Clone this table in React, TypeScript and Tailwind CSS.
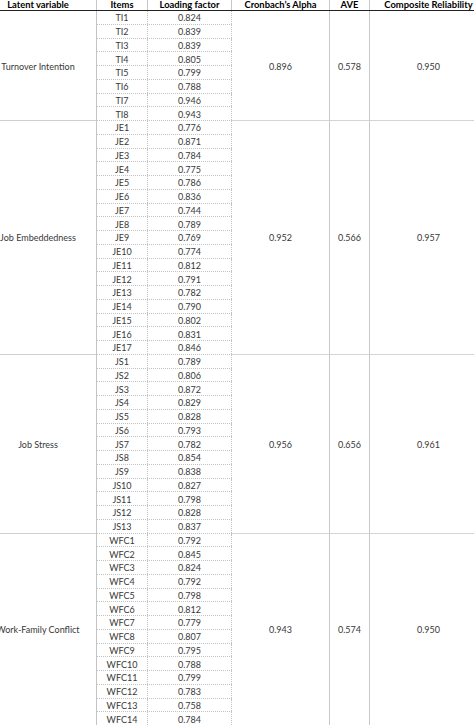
import React from "react";

type Group = {
  name: string;
  prefix: string;
  loads: string[];
  alpha: string;
  ave: string;
  cr: string;
};

const groups: Group[] = [
  {
    name: "Turnover Intention",
    prefix: "TI",
    loads: ["0.824", "0.839", "0.839", "0.805", "0.799", "0.788", "0.946", "0.943"],
    alpha: "0.896",
    ave: "0.578",
    cr: "0.950",
  },
  {
    name: "Job Embeddedness",
    prefix: "JE",
    loads: [
      "0.776", "0.871", "0.784", "0.775", "0.786", "0.836", "0.744", "0.789", "0.769",
      "0.774", "0.812", "0.791", "0.782", "0.790", "0.802", "0.831", "0.846",
    ],
    alpha: "0.952",
    ave: "0.566",
    cr: "0.957",
  },
  {
    name: "Job Stress",
    prefix: "JS",
    loads: [
      "0.789", "0.806", "0.872", "0.829", "0.828", "0.793", "0.782", "0.854", "0.838",
      "0.827", "0.798", "0.828", "0.837",
    ],
    alpha: "0.956",
    ave: "0.656",
    cr: "0.961",
  },
  {
    name: "Work-Family Conflict",
    prefix: "WFC",
    loads: [
      "0.792", "0.845", "0.824", "0.792", "0.798", "0.812", "0.779", "0.807", "0.795",
      "0.788", "0.799", "0.783", "0.758", "0.784",
    ],
    alpha: "0.943",
    ave: "0.574",
    cr: "0.950",
  },
];

const headers = [
  { t: "Latent variable", w: "w-[117px] border-r" },
  { t: "Items", w: "w-[51px] border-r" },
  { t: "Loading factor", w: "w-[84px] border-r" },
  { t: "Cronbach’s Alpha", w: "w-[98px] border-r" },
  { t: "AVE", w: "w-[40px] border-r" },
  { t: "Composite Reliability", w: "w-[117px]" },
];

export default function App() {
  return (
    <div className="w-[474px] h-[725px] overflow-hidden bg-white font-['Lato','Open_Sans',sans-serif] text-[9px] leading-none text-[#383838]">
      <div className="ml-[-20px] w-[507px] flex flex-col">
        <div className="flex h-[11px] border-b border-[#222]">
          {headers.map((h) => (
            <div
              key={h.t}
              className={`${h.w} shrink-0 flex items-start justify-center whitespace-nowrap border-r-[#c8c8c8] text-[9.4px] leading-[10px] font-bold text-black`}
            >
              {h.t}
            </div>
          ))}
        </div>
        {groups.map((g) => (
          <div key={g.name} className="flex">
            <div className="w-[117px] shrink-0 flex items-center justify-center whitespace-nowrap pt-px border-r border-b border-[#c4c4c4] border-b-[#cfcfcf]">
              {g.name}
            </div>
            <div className="w-[135px] shrink-0 flex flex-col">
              {g.loads.map((l, i) => (
                <div key={i} className="flex h-[13.75px] border-b border-dotted border-[#c2c2c2]">
                  <div className="w-[51px] shrink-0 flex items-center justify-center pt-px border-r border-dotted border-[#c2c2c2]">
                    {g.prefix}
                    {i + 1}
                  </div>
                  <div className="w-[84px] shrink-0 flex items-center justify-center pt-px border-r border-dotted border-[#c2c2c2]">
                    {l}
                  </div>
                </div>
              ))}
            </div>
            <div className="w-[98px] shrink-0 flex items-center justify-center pt-px border-r border-b border-[#c8c8c8] border-b-[#d4d4d4]">
              {g.alpha}
            </div>
            <div className="w-[40px] shrink-0 flex items-center justify-center pt-px border-r border-b border-[#c8c8c8] border-b-[#d4d4d4]">
              {g.ave}
            </div>
            <div className="w-[117px] shrink-0 flex items-center justify-center pt-px border-b border-[#d4d4d4]">
              {g.cr}
            </div>
          </div>
        ))}
      </div>
    </div>
  );
}
